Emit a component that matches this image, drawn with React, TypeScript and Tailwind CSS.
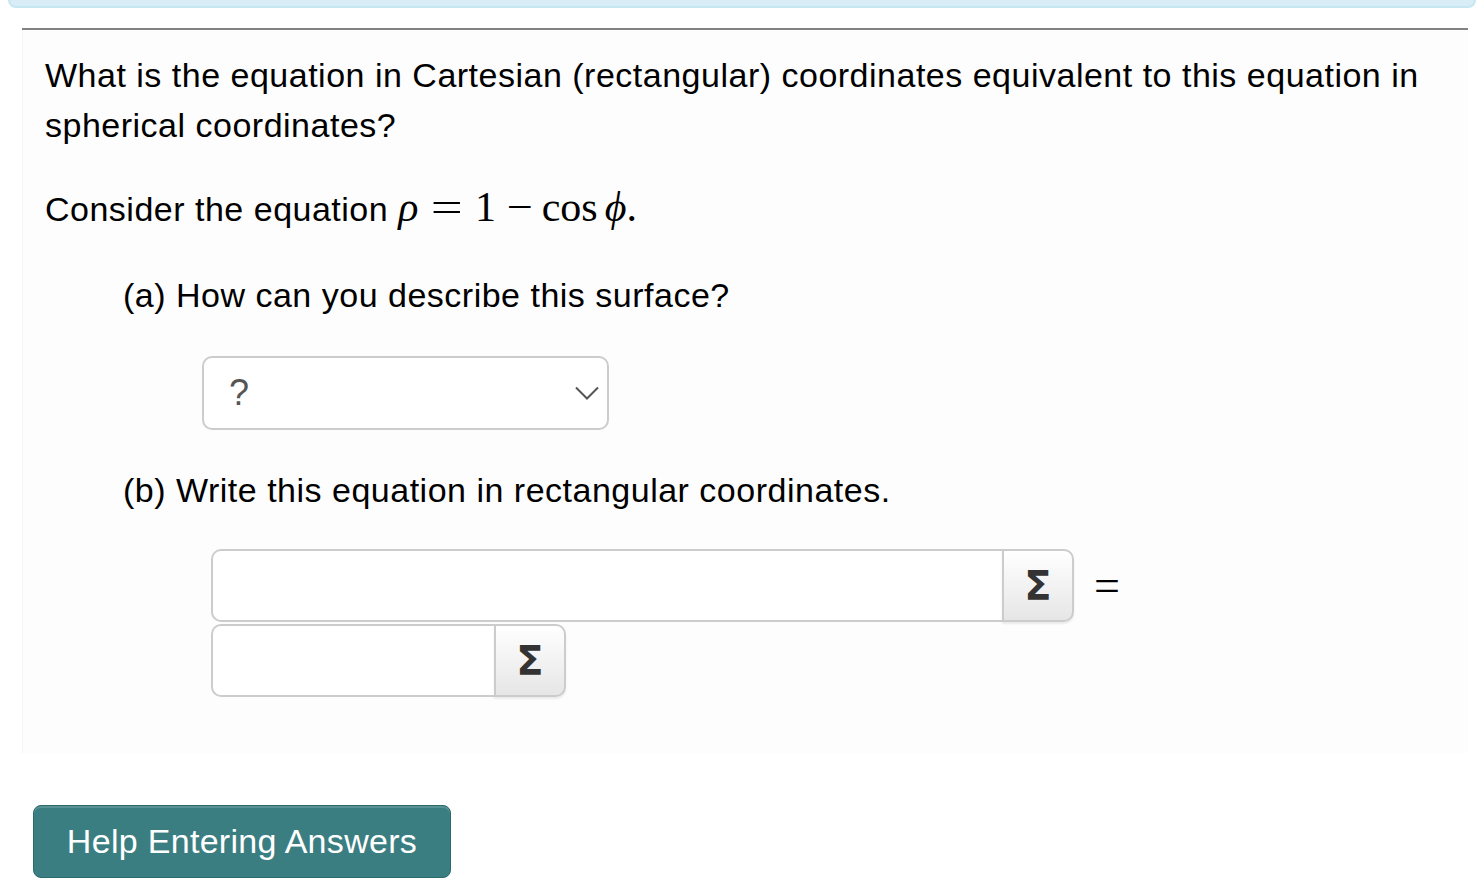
import React from 'react';

function Sigma() {
  return (
    <span className="font-['DejaVu_Sans',sans-serif] text-[40px] font-bold leading-none text-[#333]">Σ</span>
  );
}

function MathInput({ width }: { width: string }) {
  return (
    <div className="flex h-[73px]">
      <div className={`${width} h-full rounded-l-[10px] border-2 border-r-0 border-[#ccc] bg-white`} />
      <button className="flex h-full w-[72px] items-center justify-center rounded-r-[10px] border-2 border-[#ccc] bg-gradient-to-b from-white to-[#e6e6e6] shadow-[0_2px_2px_rgba(0,0,0,0.08)]">
        <Sigma />
      </button>
    </div>
  );
}

const body = 'text-[34px] tracking-[0.5px] leading-[50px]';

export default function App() {
  return (
    <div className="min-h-[892px] bg-white font-['Liberation_Sans',Arial,sans-serif] text-black">
      {/* Top notice strip */}
      <div className="mx-[8px] h-[8px] rounded-b-[10px] border-x-2 border-b-2 border-[#c6e6f0] bg-[#d9edf7]" />

      <div className="ml-[22px] mr-[16px] mt-[20px]">
        <div className="h-[2px] bg-[#828282]" />
        <div className="border-l border-[#f5f5f5] bg-[#fdfdfd] pb-[56px] pl-[22px] pr-[30px] pt-[20px]">
          <p className={body}>
            What is the equation in Cartesian (rectangular) coordinates equivalent to this equation in spherical coordinates?
          </p>

          <p className={`mt-[34px] h-[50px] ${body}`}>
            Consider the equation{' '}
            <span className="font-['Liberation_Serif',serif] text-[42px] leading-none tracking-normal">
              <i>ρ</i>
              <span className="ml-[17px] mr-[16px] inline-block scale-x-[1.35]">=</span>
              1
              <span className="ml-[12px] mr-[10px] inline-block scale-x-[1.1]">−</span>
              cos<span className="ml-[7px]"><i>ϕ</i></span>.
            </span>
          </p>

          <div className="pl-[78px]">
            <p className={`mt-[36px] ${body}`}>(a) How can you describe this surface?</p>

            <div className="ml-[79px] mt-[36px] flex h-[74px] w-[407px] items-center justify-between rounded-[10px] border-2 border-[#cccccc] bg-white pl-[25px] pr-[8px]">
              <span className="text-[36px] text-[#555]">?</span>
              <svg width="24" height="14" viewBox="0 0 24 14" fill="none" stroke="#555" strokeWidth="2">
                <path d="M1 1.5 L12 12.5 L23 1.5" />
              </svg>
            </div>

            <p className={`mt-[35px] ${body}`}>(b) Write this equation in rectangular coordinates.</p>

            <div className="ml-[88px] mt-[34px] flex flex-col gap-[2px]">
              <div className="flex items-center">
                <MathInput width="w-[791px]" />
                <span className="ml-[20px] font-['Liberation_Serif',serif] text-[46px] leading-none">=</span>
              </div>
              <MathInput width="w-[283px]" />
            </div>
          </div>
        </div>
      </div>

      <div className="pl-[33px] pt-[52px]">
        <button className="h-[73px] w-[418px] rounded-[8px] border border-[#2d6a6d] bg-[#3a7e81] text-[34px] tracking-[0.3px] text-white shadow-[inset_0_2px_0_rgba(255,255,255,0.15)]">
          Help Entering Answers
        </button>
      </div>
    </div>
  );
}
